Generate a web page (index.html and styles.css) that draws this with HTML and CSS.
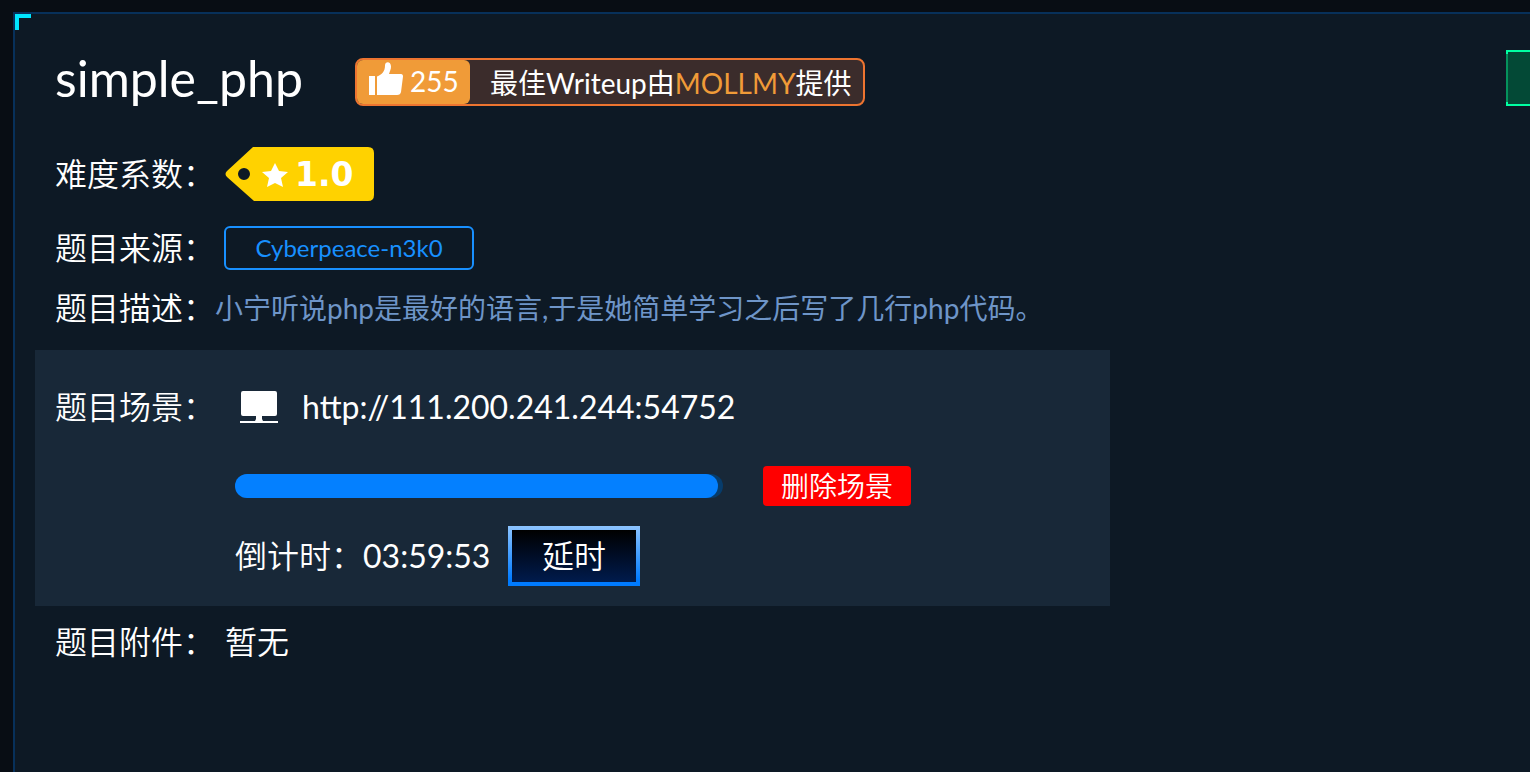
FILE: index.html
```html
<!DOCTYPE html>
<html lang="zh-CN">
<head>
    <meta charset="UTF-8">
    <meta name="viewport" content="width=device-width, initial-scale=1.0">
    <title>simple_php</title>
    <link rel="stylesheet" href="styles.css">
</head>
<body>
    <main class="panel">
        <span class="corner"></span>
        <header class="header">
            <h1 class="title">simple_php</h1>
            <div class="writeup">
                <button class="like" type="button">
                    <svg width="36" height="36" viewBox="0 0 36 36" aria-hidden="true">
                        <path fill="#fff" d="M1 15h6v19H1zM9 15.500c5-2 8-5 8-11C17 0 23 0 23 5.500c0 3-1 4-2 7.500h12c1.500 0 2 1 2 2.500L33 31c-.5 2-1.500 3-4 3H9z"/>
                    </svg>
                    <span>255</span>
                </button>
                <p class="writeup-text">最佳Writeup由<a class="author" href="#">MOLLMY</a>提供</p>
            </div>
            <button class="side-button" type="button"></button>
        </header>

        <div class="row difficulty">
            <span class="label">难度系数：</span>
            <svg class="tag" width="150" height="54" viewBox="0 0 150 54">
                <path fill="#ffd200" fill-rule="evenodd" d="M28 0h115q6 0 6 6v42q0 6-6 6H29L2 30q-3-3 0-6zM19 21a6 6 0 1 0 0 12 6 6 0 1 0 0-12z"/>
                <path fill="#fff" d="M50 16l4 8 9 1-7 6 2 9-8-4-8 4 2-9-7-6 9-1z"/>
                <text class="tag-text" x="70" y="39">1.0</text>
            </svg>
        </div>

        <div class="row source">
            <span class="label">题目来源：</span>
            <a class="source-link" href="#">Cyberpeace-n3k0</a>
        </div>

        <div class="row desc">
            <span class="label">题目描述：</span>
            <p class="desc-text">小宁听说php是最好的语言,于是她简单学习之后写了几行php代码。</p>
        </div>

        <section class="scene">
            <div class="scene-row">
                <span class="label">题目场景：</span>
                <svg class="monitor" width="38" height="32" viewBox="0 0 38 32" aria-hidden="true">
                    <path fill="#fff" d="M3 0h32q2 0 2 2v21q0 2-2 2H22v3l1 2h15v2H0v-2h15l1-2v-3H3q-2 0-2-2V2q0-2 2-2z"/>
                </svg>
                <a class="url" href="#">http://111.200.241.244:54752</a>
            </div>
            <div class="scene-body">
                <div class="progress-row">
                    <div class="progress"><div class="progress-bar" style="width: 99%"></div></div>
                    <button class="delete" type="button">删除场景</button>
                </div>
                <div class="time-row">
                    <p class="countdown">倒计时：<span class="time">03:59:53</span></p>
                    <button class="delay" type="button">延时</button>
                </div>
            </div>
        </section>

        <div class="row attachment">
            <span class="label">题目附件：</span>
            <span class="none">暂无</span>
        </div>
    </main>
</body>
</html>
```
FILE: styles.css
```css
* {
    box-sizing: border-box;
}

body {
    margin: 0;
    padding: 12px 0 0 13px;
    background-color: #080d14;
    color: #fff;
    font-family: Lato, "Noto Sans CJK SC", sans-serif;
    font-size: 32px;
    font-weight: 350;
    line-height: 40px;
    overflow: hidden;
}

h1, p {
    margin: 0;
    font-weight: inherit;
}

button {
    padding: 0;
    border: 0;
    color: inherit;
    font: inherit;
    cursor: pointer;
}

a {
    color: inherit;
    text-decoration: none;
}

.panel {
    position: relative;
    min-height: 100vh;
    padding: 36px 0 0 20px;
    border-top: 2px solid #07305a;
    border-left: 2px solid #07305a;
    background-color: #0d1925;
}

.corner {
    position: absolute;
    top: 0;
    left: 0;
    width: 16px;
    height: 16px;
    border-top: 4px solid #00e5ff;
    border-left: 4px solid #00e5ff;
}

.header {
    display: flex;
    align-items: flex-end;
    margin-bottom: 41px;
    padding-left: 20px;
}

.title {
    width: 300px;
    font-size: 50px;
    font-weight: 400;
    line-height: 56px;
}

.writeup {
    display: flex;
    height: 48px;
    border: 2px solid #ed7430;
    border-radius: 8px;
    background-color: #3b2c2b;
    font-size: 28px;
    font-weight: 400;
}

.like {
    display: flex;
    align-items: flex-start;
    gap: 6px;
    width: 113px;
    padding: 1px 0 0 11px;
    border-radius: 6px;
    background-color: #f09b38;
}

.writeup-text {
    padding: 3px 12px 0 20px;
}

.author {
    color: #f09b38;
}

.side-button {
    width: 24px;
    height: 56px;
    margin-left: auto;
    border: 2px solid;
    border-right: 0;
    border-image: linear-gradient(#00ffa2 4px, #05915c 4px, #05915c 52px, #00ffa2 52px) 2;
    background-color: #034936;
}

.row {
    display: flex;
    align-items: center;
    padding-left: 20px;
}

.label {
    width: 160px;
}

.difficulty {
    margin-bottom: 25px;
}

.tag {
    margin-left: 10px;
}

.tag-text {
    fill: #fff;
    font-family: "DejaVu Sans", sans-serif;
    font-size: 33px;
    font-weight: 700;
}

.source {
    margin-bottom: 18px;
}

.source-link {
    min-width: 250px;
    margin-left: 9px;
    border: 2px solid #1890ff;
    border-radius: 6px;
    color: #1890ff;
    font-size: 24px;
    font-weight: 400;
    text-align: center;
}

.desc {
    margin-bottom: 22px;
}

.desc-text {
    color: #6e95c8;
    font-size: 28px;
    font-weight: 400;
}

.scene {
    max-width: 1075px;
    padding: 37px 20px 20px;
    background-color: #182838;
}

.scene-row {
    display: flex;
    align-items: center;
    margin-bottom: 39px;
}

.monitor {
    margin: 0 24px 0 25px;
}

.url, .time {
    font-weight: 400;
}

.scene-body {
    padding-left: 180px;
}

.progress-row {
    display: flex;
    align-items: center;
    gap: 40px;
    margin-bottom: 20px;
}

.progress {
    width: 488px;
    height: 24px;
    border-radius: 12px;
    background-color: #073c6b;
}

.progress-bar {
    height: 24px;
    border-radius: 12px;
    background-color: #0480ff;
}

.delete {
    width: 148px;
    height: 40px;
    border-radius: 4px;
    background-color: #ff0000;
    font-size: 28px;
}

.time-row {
    display: flex;
    align-items: center;
}

.countdown {
    min-width: 273px;
}

.delay {
    width: 132px;
    height: 60px;
    border: 4px solid;
    border-image: linear-gradient(#8cc4ff, #007bff 90%) 4;
    background: linear-gradient(#000, #001b4d);
}

.attachment {
    margin-top: 16px;
}

.none {
    margin-left: 10px;
}
```
